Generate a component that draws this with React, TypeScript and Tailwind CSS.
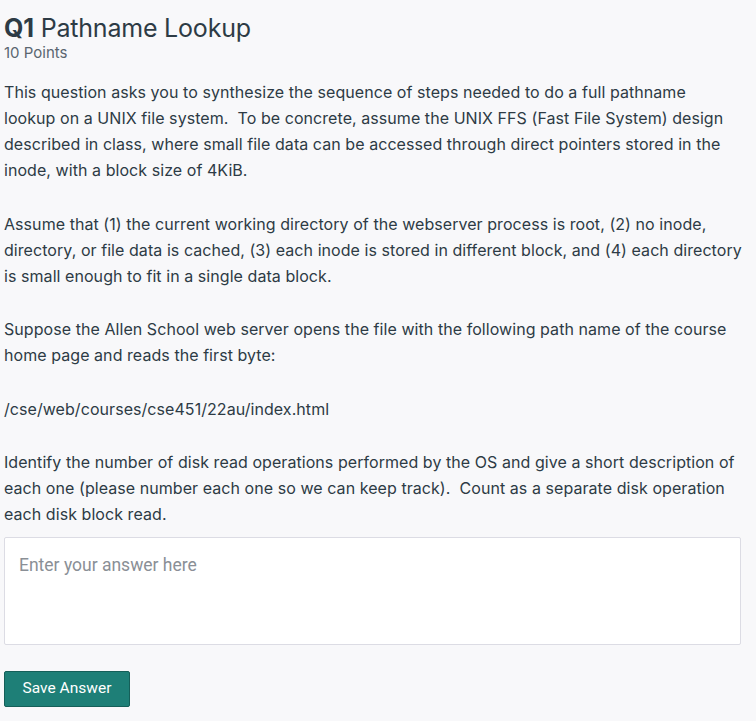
export default function App() {
  return (
    <div className="min-h-screen bg-[#f8f8fa] px-[4px] pt-[12px] text-[#2d3b45] font-['Inter','Liberation_Sans',sans-serif]">
      <div className="w-[737px]">
        <h1 className="text-[25px] leading-[32px] tracking-[-0.2px]">
          <span className="font-bold">Q1</span> Pathname Lookup
        </h1>
        <div className="text-[15px] leading-[18px] text-[#5a6670]">10 Points</div>

        <div className="mt-[17px] whitespace-nowrap text-[16px] leading-[26px] tracking-[0.06px]">
          <p className="mb-[27.5px]">
            This question asks you to synthesize the sequence of steps needed to do a full pathname
            <br />
            lookup on a UNIX file system.&nbsp; To be concrete, assume the UNIX FFS (Fast File System) design
            <br />
            described in class, where small file data can be accessed through direct pointers stored in the
            <br />
            inode, with a block size of 4KiB.
          </p>
          <p className="mb-[27.5px]">
            Assume that (1) the current working directory of the webserver process is root, (2) no inode,
            <br />
            directory, or file data is cached, (3) each inode is stored in different block, and (4) each directory
            <br />
            is small enough to fit in a single data block.
          </p>
          <p className="mb-[27.5px]">
            Suppose the Allen School web server opens the file with the following path name of the course
            <br />
            home page and reads the first byte:
          </p>
          <p className="mb-[27.5px]">/cse/web/courses/cse451/22au/index.html</p>
          <p>
            Identify the number of disk read operations performed by the OS and give a short description of
            <br />
            each one (please number each one so we can keep track).&nbsp; Count as a separate disk operation
            <br />
            each disk block read.
          </p>
        </div>

        <textarea
          placeholder="Enter your answer here"
          className="mt-[10px] block h-[108px] w-full resize-none rounded-[2px] border border-[#dcdce4] bg-white px-[14px] pt-[16px] pb-[14px] font-['Roboto',sans-serif] text-[17.5px] leading-[22px] placeholder:text-[#8a8f96] outline-none"
        />

        <button className="mt-[26px] h-[36px] w-[126px] rounded-[2px] border border-[#155f59] bg-[#1e7f77] font-['Roboto',sans-serif] text-[15.5px] text-white">
          Save Answer
        </button>
      </div>
    </div>
  );
}
